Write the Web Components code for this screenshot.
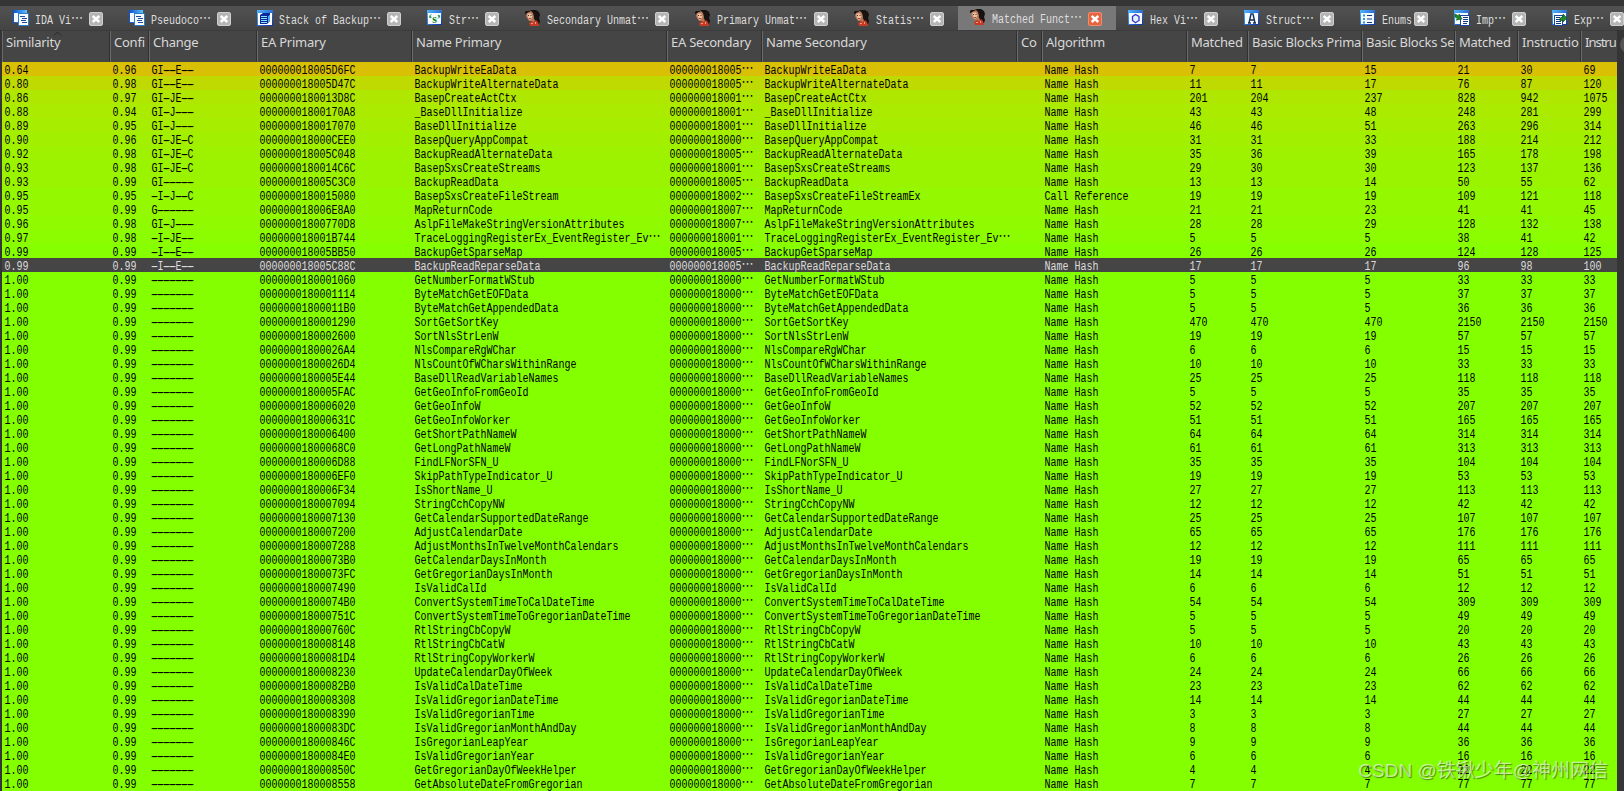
<!DOCTYPE html>
<html lang="zh-CN">
<head>
<meta charset="utf-8">
<title>Matched Functions</title>
<style>
    html, body {
        margin: 0;
        height: 100%;
        overflow: hidden;
        background: #353535;
    }
</style>
</head>
<body>
<diff-window></diff-window>

<script>
const TABS = [
    // icon, label, width
    ['doc', 'IDA Vi…', 116],
    ['doc', 'Pseudoco…', 128],
    ['stack', 'Stack of Backup…', 170],
    ['strings', 'Str…', 98],
    ['lady', 'Secondary Unmat…', 170],
    ['lady', 'Primary Unmat…', 159],
    ['lady', 'Statis…', 116],
    ['lady', 'Matched Funct…', 158, true],
    ['hex', 'Hex Vi…', 116],
    ['struct', 'Struct…', 116],
    ['enums', 'Enums', 94],
    ['import', 'Imp…', 98],
    ['export', 'Exp…', 84],
];

const COLUMNS = [
    ['Similarity', 108], ['Confi', 39], ['Change', 108], ['EA Primary', 155],
    ['Name Primary', 255], ['EA Secondary', 95], ['Name Secondary', 255], ['Co', 25],
    ['Algorithm', 145], ['Matched', 61], ['Basic Blocks Prima', 114],
    ['Basic Blocks Se', 93], ['Matched', 63], ['Instructio', 63], ['Instru', 36],
];
const GRID = COLUMNS.map(c => c[1] + 'px').join(' ');

const COLORS = {
    '0.64': '#d9c005', '0.80': '#bfda00', '0.86': '#b0e700', '0.88': '#aaeb00', '0.89': '#a7ed00',
    '0.90': '#a3ef00', '0.92': '#9ef200', '0.93': '#9af400', '0.95': '#94f800', '0.96': '#90fa00',
    '0.97': '#8cfc00', '0.99': '#86ff00', '1.00': '#84ff00',
};

// similarity confidence change ea name eaSecondary counts...
const CHANGED = `
0.64 0.96 GI--E-- 5D6FC BackupWriteEaData 5 7 7 15 21 30 69
0.80 0.98 GI--E-- 5D47C BackupWriteAlternateData 5 11 11 17 76 87 120
0.86 0.97 GI-JE-- 13D8C BasepCreateActCtx 1 201 204 237 828 942 1075
0.88 0.94 GI-J--- 170A8 _BaseDllInitialize 1 43 43 48 248 281 299
0.89 0.95 GI-J--- 17070 BaseDllInitialize 1 46 46 51 263 296 314
0.90 0.96 GI-JE-C 0CEE0 BasepQueryAppCompat 0 31 31 33 188 214 212
0.92 0.98 GI-JE-C 5C048 BackupReadAlternateData 5 35 36 39 165 178 198
0.93 0.98 GI-JE-C 14C6C BasepSxsCreateStreams 1 29 30 30 123 137 136
0.93 0.99 GI----- 5C3C0 BackupReadData 5 13 13 14 50 55 62
0.95 0.95 -I-J--C 15080 BasepSxsCreateFileStream 2 19 19 19 109 121 118
0.95 0.99 G------ 6E8A0 MapReturnCode 7 21 21 23 41 41 45
0.96 0.98 GI-J--- 770D8 AslpFileMakeStringVersionAttributes 7 28 28 29 128 132 138
0.97 0.98 -I-JE-- 1B744 TraceLoggingRegisterEx_EventRegister_Ev… 1 5 5 5 38 41 42
0.99 0.99 -I--E-- 5BB50 BackupGetSparseMap 5 26 26 26 124 128 125
0.99 0.99 -I--E-- 5C88C BackupReadReparseData 5 17 17 17 96 98 100`;

// ea name blocks instructions
const IDENTICAL = `
1060 GetNumberFormatWStub 5 33
1114 ByteMatchGetEOFData 5 37
11B0 ByteMatchGetAppendedData 5 36
1290 SortGetSortKey 470 2150
2600 SortNlsStrLenW 19 57
26A4 NlsCompareRgWChar 6 15
26D4 NlsCountOfWCharsWithinRange 10 33
5E44 BaseDllReadVariableNames 25 118
5FAC GetGeoInfoFromGeoId 5 35
6020 GetGeoInfoW 52 207
631C GetGeoInfoWorker 51 165
6400 GetShortPathNameW 64 314
68C0 GetLongPathNameW 61 313
6D88 FindLFNorSFN_U 35 104
6EF0 SkipPathTypeIndicator_U 19 53
6F34 IsShortName_U 27 113
7094 StringCchCopyNW 12 42
7130 GetCalendarSupportedDateRange 25 107
7200 AdjustCalendarDate 65 176
7288 AdjustMonthsInTwelveMonthCalendars 12 111
73B0 GetCalendarDaysInMonth 19 65
73FC GetGregorianDaysInMonth 14 51
7490 IsValidCalId 6 12
74B0 ConvertSystemTimeToCalDateTime 54 309
751C ConvertSystemTimeToGregorianDateTime 5 49
760C RtlStringCbCopyW 5 20
8148 RtlStringCbCatW 10 43
81D4 RtlStringCopyWorkerW 6 26
8230 UpdateCalendarDayOfWeek 24 66
82B0 IsValidCalDateTime 23 62
8308 IsValidGregorianDateTime 14 44
8390 IsValidGregorianTime 3 27
83DC IsValidGregorianMonthAndDay 8 44
846C IsGregorianLeapYear 9 36
84E0 IsValidGregorianYear 6 16
850C GetGregorianDayOfWeekHelper 4 22
8558 GetAbsoluteDateFromGregorian 7 77`;

const rows = [];
for (const line of CHANGED.trim().split('\n')) {
    const [sim, conf, change, ea, name, ea2, ...counts] = line.split(' ');
    const moved = name === 'BasepSxsCreateFileStream';
    rows.push([sim, conf, change, '00000001800' + ea, name, '00000001800' + ea2 + '…',
        moved ? name + 'Ex' : name, '', moved ? 'Call Reference' : 'Name Hash', ...counts]);
}
for (const line of IDENTICAL.trim().split('\n')) {
    const [ea, name, b, i] = line.split(' ');
    rows.push(['1.00', '0.99', '-------', '000000018000' + ea, name, '000000018000…',
        name, '', 'Name Hash', b, b, b, i, i, i]);
}

// narrow pixel-like text used by the tabs and the rows
const BITMAP_TEXT = `
    .t {
        display: block;
        font: 10px/14px "Liberation Mono", monospace;
        white-space: pre;
        transform: translateY(2.4px) scaleY(1.2);
        transform-origin: 0 50%;
    }
    .dots { font: 12px/1px "Noto Sans CJK SC", sans-serif; }
    /* widens each hyphen until it joins the next one */
    .dash { text-shadow: -1.5px 0 currentColor, 1.5px 0 currentColor; }
`;

function markup(text) {
    return text.replace('…', '<span class="dots">…</span>');
}

const BLUE = `<defs><linearGradient id="g" x2="1" y2="1"><stop stop-color="#52b8ff"/><stop offset="1" stop-color="#0a2fae"/></linearGradient></defs>`;
const FRAME = `${BLUE}<path fill="url(#g)" d="M0 0h15v15H0z"/><path fill="#f4faff" d="M1 3h13v11H1z"/>`;

const ICONS = {
    doc: `<defs><linearGradient id="g" x2="1"><stop stop-color="#0b4fd0"/><stop offset="1" stop-color="#58c4ff"/></linearGradient></defs>
        <path fill="url(#g)" d="M0 0h14v13H0z"/><path fill="#f2faff" d="M1 3h12v9H1z"/>
        <path fill="#2e7bc4" d="M5 3h11v13H5z"/><path fill="#f6fbff" d="M6 4h9v11H6z"/>
        <path stroke="#1d4a96" d="M7 6.500h5M9 8.500h5M8 10.500h5M9 12.500h5"/>`,
    stack: `${BLUE}<rect width="16" height="16" fill="url(#g)"/>
        <path fill="#fff" d="M1 3h14v12H1z"/><path fill="#062a9c" d="M3 5l3-2h7v8l-3 3H3z"/>
        <path stroke="#8ce4ff" d="M4 6.500h6M4 8.500h6M4 10.500h6M4 12.500h6"/><path fill="none" stroke="#4aa7f5" d="M11.500 6v6M12.500 5v6"/>`,
    strings: `${FRAME}<text x="7.5" y="12.5" text-anchor="middle" font-family="Liberation Serif" font-weight="bold" font-size="12" fill="#11842b">‘s’</text>`,
    lady: `<path fill="#16100e" d="M0 2l1-1h3l3-1h4l3 2 1 3-1 3 1 3-1 3h-2l-3-4-3-6-3-1-3 1z"/>
        <path fill="#1a1210" d="M8 2h5v9H9z"/>
        <path fill="#b5785a" d="M2 3l4-2 2 2 1 4-1 4-4 0-2-3-1-2z"/><path fill="#ecc0a2" d="M2.500 3.500h3.500l1.500 2.500-1.500 3.500H4L2.500 6z"/>
        <path fill="#5a3225" d="M3 5h1v1H3zM5.500 5h1v1h-1z"/><path fill="#b04a38" d="M4 8h2v1H4z"/><path fill="#b8775a" d="M6 10l3-2 1 3-2 3z"/>
        <path fill="#c63a26" d="M4 13l3-2 2 1 2-2 2 2 1 3v1H5z"/><path fill="#f0a080" d="M6 13h2v1H6zM10 12h1v2h-1z"/>`,
    hex: `${FRAME}<path fill="#dff0ff" stroke="#3434ce" stroke-width="1.300" d="M4.500 6.500l3-2 3.500 2v4l-3.500 2.200-3-2.200z"/>`,
    struct: `${FRAME}<path fill="none" stroke="#162f52" stroke-width="1.400" d="M4 13h3M9 13h3M5 13l2-9h2l2 9M6 10h4"/><path stroke="#2c6f9f" d="M6 4h3"/>`,
    enums: `${FRAME}<path stroke="#173a85" d="M7 5.500h5M7 9h5M7 12.500h5"/><path stroke="#2b96e0" stroke-width="2" d="M3 5.500h2M3 9h2M3 12.500h2"/>`,
    import: `${FRAME}<path fill="#1647a0" d="M6 5h10v11H6z"/><path fill="#fff" d="M7 6h8v9H7z"/>
        <path stroke="#14397f" d="M9 7.500h5M9 9.500h5M9 11.500h5M9 13.500h4"/><path fill="#1c8c27" stroke="#0a4d12" stroke-width=".6" d="M1 4l2 1 2 1V4l3 5-6 1 2-1-3-2z"/>`,
    export: `${FRAME}<path fill="#1647a0" d="M2 5h9v11H2z"/><path fill="#fff" d="M3 6h7v9H3z"/>
        <path stroke="#14397f" d="M4 7.500h4M4 9.500h4M4 11.500h5M4 13.500h5"/><path fill="#1c8c27" stroke="#0a4d12" stroke-width=".6" d="M8 11V8l3-1V4l4 4-4 4v-2z"/>`,
};

class TabIcon extends HTMLElement {
    connectedCallback() {
        this.attachShadow({ mode: 'open' }).innerHTML = `
        <style>
            :host { display: block; width: 16px; height: 16px; }
            svg { display: block; }
        </style>
        <svg width="16" height="16" viewBox="0 0 16 16">${ICONS[this.getAttribute('name')]}</svg>
        `;
    }
}

class DockTab extends HTMLElement {
    connectedCallback() {
        this.attachShadow({ mode: 'open' }).innerHTML = `
        <style>
            :host {
                display: flex;
                flex: none;
                box-sizing: border-box;
                height: 24px;
                padding: 4px 14px 0 12px;
                color: #dedede;
            }
            :host(:last-of-type) { padding-right: 0; }
            :host([active]) { background: #787878; }
            :host([active]) tab-icon { margin-top: -1px; }
            :host([active]) .t { margin-top: 1px; }
            .t { flex: 1; margin: 2px 0 0 6px; height: 14px; }
            .close { display: block; margin-top: 2px; }
            .close rect { fill: #b5b5b5; stroke: #cecece; }
            :host([active]) .close rect { fill: #e4653f; stroke: #f08b6c; }
            ${BITMAP_TEXT}
        </style>
        <tab-icon name="${this.getAttribute('icon')}"></tab-icon>
        <span class="t">${markup(this.getAttribute('label'))}</span>
        <svg class="close" width="14" height="14" viewBox="0 0 14 14">
            <rect x=".5" y=".5" width="13" height="13" rx="1.500"/>
            <path stroke="#fff" stroke-width="2.400" d="M3.700 4l6.600 6M10.300 4l-6.600 6"/>
        </svg>
        `;
    }
}

class MatchHeader extends HTMLElement {
    connectedCallback() {
        this.attachShadow({ mode: 'open' }).innerHTML = `
        <style>
            :host {
                display: grid;
                grid-template-columns: ${GRID};
                height: 32px;
                background: #454545;
                border-top: 1px solid #3c3c3c;
                box-sizing: border-box;
                color: #d8d8d8;
                font: 13px/22px "Noto Sans", sans-serif;
                letter-spacing: -0.24px;
            }
            div {
                border-left: 1px solid #6a6a6a;
                box-shadow: -1px 0 #303030;
                padding-left: 3px;
                position: relative;
                white-space: nowrap;
            }
            div:last-child { letter-spacing: -1px; }
            svg { position: absolute; left: 50px; top: 0; }
        </style>
        ${COLUMNS.map(([name], i) => `<div>${i ? '' : '<svg width="9" height="5"><path fill="none" stroke="#292929" d="M1 4.500l3.500-3.500L8 4.500"/></svg>'}<span>${name}</span></div>`).join('')}
        `;
    }
}

class MatchRow extends HTMLElement {
    set cells(cells) {
        this.style.background = this.hasAttribute('selected') ? '#454545' : COLORS[cells[0]];
        this.attachShadow({ mode: 'open' }).innerHTML = `
        <style>
            :host {
                display: grid;
                grid-template-columns: ${GRID};
                height: 14px;
                color: #000;
            }
            :host([selected]) { color: #dcdcdc; }
            .t { padding-left: 2.500px; height: 14px; min-width: 0; }
            ${BITMAP_TEXT}
        </style>
        ${cells.map((text, i) => `<span class="t">${i === 2 ? text.replace(/-+/g, '<span class="dash">$&</span>') : markup(text)}</span>`).join('')}
        `;
    }
}

class DiffWindow extends HTMLElement {
    connectedCallback() {
        this.attachShadow({ mode: 'open' }).innerHTML = `
        <style>
            :host {
                display: flex;
                flex-direction: column;
                position: relative;
                box-sizing: border-box;
                height: 791px;
                padding-top: 6px;
                overflow: hidden;
                background: #353535;
            }
            nav {
                display: flex;
                flex: none;
                height: 24px;
                padding-left: 1px;
                overflow: hidden;
                background: linear-gradient(#525252, #434343);
            }
            main { display: flex; flex: none; height: 761px; padding-left: 2px; }
            .table { width: 1615px; overflow: hidden; background: #84ff00; }
            .scroll { flex: 1; padding: 6px 0 0 3px; overflow: hidden; background: #353535; }
            .scroll i { display: block; width: 17px; height: 17px; border-radius: 50%; background: #565656; }
            .mark {
                position: absolute;
                right: 16px;
                top: 757px;
                font: 19px/28px "Liberation Sans", "Noto Sans CJK SC", sans-serif;
                white-space: nowrap;
                color: rgba(255, 255, 255, .6);
                text-shadow: 1px 1px 1px rgba(0, 0, 0, .45);
            }
        </style>
        <nav>${TABS.map(([icon, label, width, active]) => `<dock-tab icon="${icon}" label="${label}" style="width:${width}px"${active ? ' active' : ''}></dock-tab>`).join('')}</nav>
        <main>
            <div class="table"><match-header></match-header></div>
            <div class="scroll"><i></i></div>
        </main>
        <div class="mark">CSDN @铁锹少年@神州网信</div>
        `;
        const table = this.shadowRoot.querySelector('.table');
        rows.forEach((cells, i) => {
            const row = document.createElement('match-row');
            if (i === 14) row.setAttribute('selected', '');
            row.cells = cells;
            table.appendChild(row);
        });
    }
}

customElements.define('tab-icon', TabIcon);
customElements.define('dock-tab', DockTab);
customElements.define('match-header', MatchHeader);
customElements.define('match-row', MatchRow);
customElements.define('diff-window', DiffWindow);
</script>
</body>
</html>
